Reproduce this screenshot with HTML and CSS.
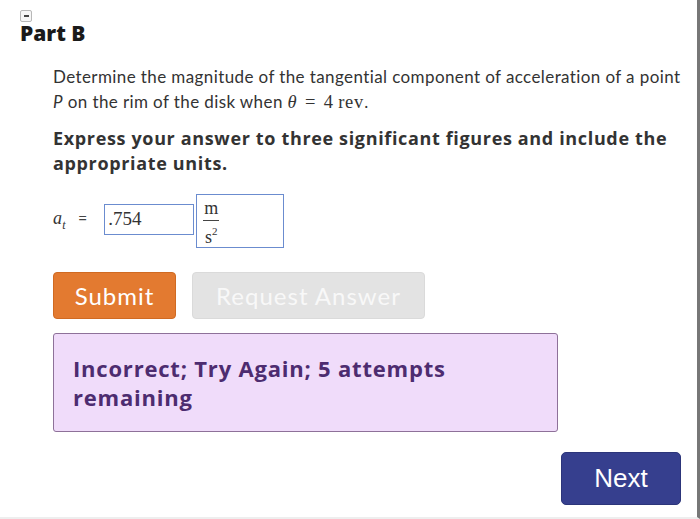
FILE: index.html
```html
<!DOCTYPE html>
<html>
<head>
<meta charset="utf-8">
<link rel="stylesheet" href="styles.css">
</head>
<body>
<div class="page">
  <div class="toggle"><span class="toggle-bar"></span></div>
  <h2 class="part-title">Part B</h2>
  <div class="content">
    <p class="question">Determine the magnitude of the tangential component of acceleration of a point <i class="sans-i">P</i> on the rim of the disk when <span class="math"><i>θ</i><span class="rel">=</span>4 <span class="unit">rev</span></span>.</p>
    <p class="instruction">Express your answer to three significant figures and include the appropriate units.</p>
    <div class="answer-row">
      <span class="math label"><i>a</i><sub><i>t</i></sub></span>
      <span class="eq">=</span>
      <span class="value-box">.754</span>
      <span class="unit-box">
        <span class="frac"><span class="num">m</span><span class="den">s<sup>2</sup></span></span>
      </span>
    </div>
    <div class="buttons">
      <button class="btn submit">Submit</button>
      <button class="btn request">Request Answer</button>
    </div>
    <div class="feedback">Incorrect; Try Again; 5 attempts remaining</div>
  </div>
  <div class="footer">
    <button class="next">Next</button>
  </div>
</div>
</body>
</html>
```

FILE: styles.css
```css
html, body {
  margin: 0;
  padding: 0;
  background: #fff;
}
body {
  width: 700px;
  height: 519px;
  overflow: hidden;
  font-family: Lato, "Open Sans", sans-serif;
  color: #222;
}
.page {
  box-sizing: border-box;
  width: 700px;
  height: 519px;
  border-right: 3px solid #777;
  border-bottom: 2px solid #eee;
  padding: 10px 0 0 20px;
}
.toggle {
  width: 10px;
  height: 10px;
  border: 1px solid #b8b8b8;
  border-radius: 2px;
  display: flex;
  align-items: center;
  justify-content: center;
  background: #f6f6f6;
}
.toggle-bar {
  width: 5px;
  height: 2px;
  background: #444;
}
.part-title {
  margin: 0;
  font-family: "Open Sans", Lato, sans-serif;
  font-size: 21px;
  font-weight: 800;
  line-height: 22px;
  color: #1a1a1a;
}
.content {
  padding-left: 33px;
  width: 628px;
}
.question {
  margin: 20px 0 0 0;
  font-size: 17px;
  letter-spacing: 0.4px;
  line-height: 25px;
  color: #333;
}
.sans-i {
  font-style: italic;
}
.math {
  font-family: "Liberation Serif", "DejaVu Serif", serif;
  font-size: 18.5px;
  letter-spacing: 0.3px;
  line-height: 20px;
}
.rel {
  margin: 0 8px;
}
.unit {
  letter-spacing: 0.8px;
}
.instruction {
  margin: 12px 0 0 0;
  font-family: "Open Sans", Lato, sans-serif;
  font-size: 18px;
  font-weight: 700;
  letter-spacing: 0.65px;
  line-height: 25px;
  color: #333;
}
.answer-row {
  margin-top: 18px;
  display: flex;
  align-items: flex-start;
}
.label {
  font-size: 18px;
  color: #333;
  margin-top: 14px;
}
.label sub {
  font-size: 12px;
}
.eq {
  margin: 14px 17px 0 12px;
  font-size: 16px;
  color: #444;
}
.value-box {
  box-sizing: border-box;
  width: 90px;
  height: 31px;
  border: 1px solid #6b8ccf;
  font-family: "Liberation Serif", serif;
  font-size: 19px;
  line-height: 24px;
  color: #333;
  padding: 2px 0 0 3px;
  margin-top: 10px;
  margin-right: 2px;
}
.unit-box {
  box-sizing: border-box;
  width: 88px;
  height: 54px;
  border: 1px solid #6b8ccf;
  padding: 3px 0 0 6px;
}
.frac {
  display: inline-flex;
  flex-direction: column;
  align-items: center;
  font-family: "Liberation Serif", serif;
  font-size: 18px;
  line-height: 20px;
  color: #333;
}
.num {
  border-bottom: 1px solid #444;
  padding: 0 1px 2px;
}
.den sup {
  font-size: 11px;
  vertical-align: 8px;
}
.buttons {
  margin-top: 24px;
  display: flex;
  gap: 16px;
}
.btn {
  height: 47px;
  border-radius: 4px;
  font-family: Lato, sans-serif;
  font-size: 24px;
  letter-spacing: 1px;
  color: #fff;
  padding: 0;
}
.submit {
  width: 123px;
  background: #e37a30;
  border: 1px solid #d06a22;
}
.request {
  width: 233px;
  background: #e3e3e3;
  color: #f8f8f8;
  border: 1px solid #dadada;
}
.feedback {
  box-sizing: border-box;
  margin-top: 14px;
  width: 505px;
  height: 99px;
  background: #f0dcfa;
  border: 1px solid #8e7199;
  border-radius: 3px;
  padding: 20px 20px 0 19px;
  font-family: "Open Sans", Lato, sans-serif;
  font-size: 22px;
  font-weight: 700;
  letter-spacing: 0.8px;
  line-height: 29px;
  color: #4d2c70;
}
.footer {
  display: flex;
  justify-content: flex-end;
  padding-right: 16px;
  margin-top: 20px;
}
.next {
  width: 120px;
  height: 53px;
  background: #363f8e;
  color: #fff;
  border: 1px solid #2c357a;
  border-radius: 5px;
  font-family: "Liberation Sans", Arial, sans-serif;
  font-size: 26px;
  padding: 0;
}
```
